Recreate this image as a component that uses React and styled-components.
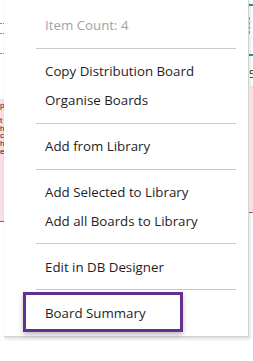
import React from 'react';
import styled, { createGlobalStyle } from 'styled-components';

const GlobalStyle = createGlobalStyle`
  html, body {
    margin: 0;
    padding: 0;
    background: #ffffff;
  }
  body {
    font-family: "Open Sans", "Noto Sans", sans-serif;
    overflow: hidden;
  }
`;

const Page = styled.div`
  display: grid;
  grid-template-columns: 4px 245px 4px;
  width: 253px;
  height: 361px;
  overflow: hidden;
`;

const Strip = styled.div`
  position: relative;
  overflow: hidden;
  display: flex;
  flex-direction: column;
`;

const Dots = styled.div`
  height: 1px;
  margin-top: ${({ top }) => top}px;
  border-top: 1px dotted #8a8a8a;
  width: 4px;
`;

const TealMark = styled.div`
  height: 2px;
  margin-top: ${({ top }) => top}px;
  background: #2e8b7a;
  width: 4px;
`;

const DashedBox = styled.div`
  height: 17px;
  margin-top: ${({ top }) => top}px;
  border-left: 1px dashed #9a9a9a;
  width: 3px;
`;

const Digit = styled.div`
  margin-top: ${({ top }) => top}px;
  font-size: 11px;
  line-height: 12px;
  color: #333;
  white-space: nowrap;
`;

const PinkBlock = styled.div`
  margin-top: ${({ top }) => top}px;
  height: ${({ h }) => h}px;
  flex-shrink: 0;
  background: #f7dfe4;
  border-bottom: 1px solid #9e5466;
  font-family: "Liberation Sans", Arial, sans-serif;
  font-size: 8px;
  line-height: 7.6px;
  color: #222;
  white-space: nowrap;
  padding-top: 3px;
  box-sizing: border-box;
`;

const Menu = styled.div`
  position: relative;
  align-self: start;
  background: #ffffff;
  border-right: 1px solid #d4d4d4;
  border-bottom: 1px solid #d4d4d4;
  box-shadow: 1px 2px 3px rgba(0, 0, 0, 0.14);
  padding: 11px 0 9px;
  height: 337px;
  box-sizing: border-box;
  display: flex;
  flex-direction: column;
`;

const Item = styled.div`
  height: 29px;
  display: flex;
  align-items: center;
  padding-left: 41px;
  font-size: 13.3px;
  color: ${({ muted }) => (muted ? '#a3a3a3' : '#1e1e1e')};
  white-space: nowrap;
`;

const Separator = styled.div`
  height: 1px;
  background: #cacaca;
  margin: 8px 12px 8px 32px;
`;

const Highlight = styled.div`
  position: absolute;
  left: 19px;
  top: 292px;
  width: 154px;
  height: 34px;
  border: 3px solid #62308f;
  box-shadow: 0 3px 5px rgba(0, 0, 0, 0.25);
  pointer-events: none;
`;

const groups = [
  ['Copy Distribution Board', 'Organise Boards'],
  ['Add from Library'],
  ['Add Selected to Library', 'Add all Boards to Library'],
  ['Edit in DB Designer'],
  ['Board Summary'],
];

export default function App() {
  return (
    <>
      <GlobalStyle />
      <Page>
        <Strip>
          <Dots top={23} />
          <Dots top={8} />
          <Dots top={18} />
          <PinkBlock top={44} h={123}>
            pi<br />
            <br />
            t<br />h<br />c<br />h<br />e
          </PinkBlock>
        </Strip>
        <Menu>
          <Item muted>Item Count: 4</Item>
          {groups.map((g, i) => (
            <React.Fragment key={i}>
              <Separator />
              {g.map((label) => (
                <Item key={label}>{label}</Item>
              ))}
            </React.Fragment>
          ))}
          <Highlight />
        </Menu>
        <Strip>
          <TealMark top={4} />
          <DashedBox top={11} />
          <TealMark top={20} />
          <Digit top={12}>5</Digit>
          <PinkBlock top={6} h={127} />
        </Strip>
      </Page>
    </>
  );
}
